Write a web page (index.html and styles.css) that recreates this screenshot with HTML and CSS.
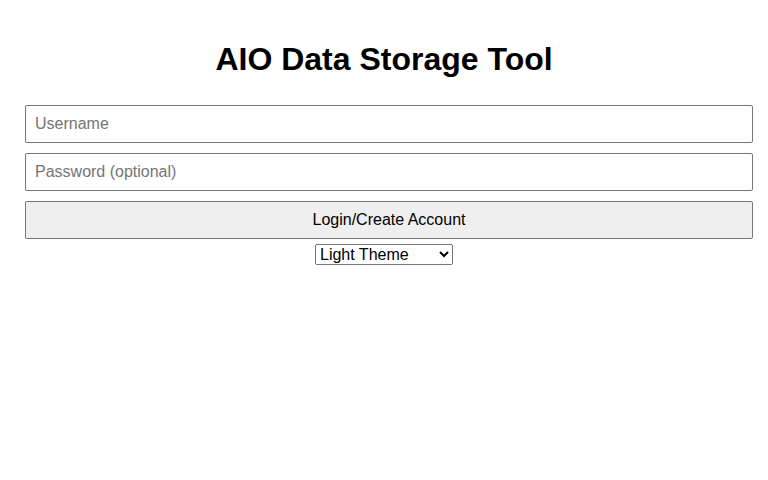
FILE: index.html
```html
<!DOCTYPE html>
<html lang="en">
<head>
    <meta charset="UTF-8">
    <meta name="viewport" content="width=device-width, initial-scale=1.0">
    <title>AIO Data Storage Tool</title>
    <link rel="stylesheet" href="styles.css">
</head>
<body>
    <h1 class="title">AIO Data Storage Tool</h1>
    <div class="login-form">
        <input type="text" id="username" class="field" placeholder="Username">
        <input type="password" id="password" class="field" placeholder="Password (optional)">
        <button class="button" id="loginBtn">Login/Create Account</button>
    </div>
    <div class="theme-row">
        <select id="themeSelect" class="theme-select">
            <option value="light">Light Theme</option>
            <option value="dark">Dark Theme</option>
        </select>
    </div>
</body>
</html>
```

FILE: styles.css
```css
body {
    margin: 0;
    padding: 0;
    font-family: "Liberation Sans", Arial, sans-serif;
    background: #FFFFFF;
    color: #000000;
}

.title {
    margin: 41px 0 27px 0;
    font-size: 32px;
    line-height: 37px;
    text-align: center;
    font-weight: bold;
}

.login-form {
    display: flex;
    flex-direction: column;
    gap: 10px;
    margin: 0 15px 0 25px;
}

.field {
    box-sizing: border-box;
    width: 100%;
    height: 38px;
    padding: 0 9px;
    border: 1px solid #767676;
    border-radius: 2px;
    font-family: "Liberation Sans", Arial, sans-serif;
    font-size: 16px;
    color: #000000;
    background: #FFFFFF;
}

.field::placeholder {
    color: #757575;
}

.button {
    box-sizing: border-box;
    width: 100%;
    height: 38px;
    background: #EFEFEF;
    border: 1px solid #767676;
    border-radius: 2px;
    font-family: "Liberation Sans", Arial, sans-serif;
    font-size: 16px;
    color: #000000;
    cursor: pointer;
}

.theme-row {
    text-align: center;
    margin-top: 5px;
}

.theme-select {
    width: 138px;
    height: 21px;
    font-family: "Liberation Sans", Arial, sans-serif;
    font-size: 16px;
}
```
